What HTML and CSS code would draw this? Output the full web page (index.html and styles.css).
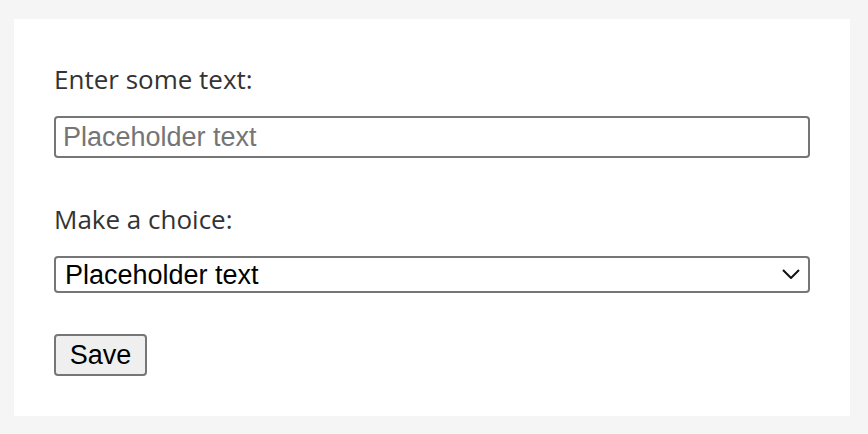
FILE: index.html
```html
<!DOCTYPE html>
<html lang="en">
<head>
  <meta charset="UTF-8">
  <meta name="viewport" content="width=device-width, initial-scale=1.0">
  <title>Form</title>
  <link rel="stylesheet" href="styles.css">
</head>
<body>
  <div class="card">
    <form class="form" onsubmit="return false">
      <div class="field">
        <label for="texto">Enter some text:</label>
        <input type="text" id="texto" placeholder="Placeholder text">
      </div>
      <div class="field">
        <label for="opcion">Make a choice:</label>
        <div class="select-wrap">
          <select id="opcion">
            <option>Placeholder text</option>
          </select>
          <svg class="chevron" width="18" height="10" viewBox="0 0 18 10">
            <path d="M1 1 L9 9 L17 1" fill="none" stroke="#111" stroke-width="2"/>
          </svg>
        </div>
      </div>
      <button type="submit">Save</button>
    </form>
  </div>
</body>
</html>
```

FILE: styles.css
```css
body {
  margin: 0;
  padding: 19px 18px 18px 14px;
  background: #f5f5f5;
  font-family: "Open Sans", sans-serif;
}
.card {
  background: #fff;
  padding: 40px;
}
.field {
  margin-bottom: 41px;
}
label {
  display: block;
  font-size: 26px;
  line-height: 40px;
  color: #333;
  margin-bottom: 17px;
}
input, select, button {
  font-family: "Liberation Sans", Arial, sans-serif;
  font-size: 27px;
  border: 2px solid #767676;
  border-radius: 4px;
  box-sizing: border-box;
  margin: 0;
}
input {
  display: block;
  width: 100%;
  height: 42px;
  padding: 0 7px;
  color: #000;
}
input::placeholder {
  color: #757575;
}
.select-wrap {
  position: relative;
}
select {
  display: block;
  width: 100%;
  height: 37px;
  padding: 0 40px 0 9px;
  appearance: none;
  background: #fff;
  color: #000;
}
.chevron {
  position: absolute;
  right: 10px;
  top: 13px;
  pointer-events: none;
}
button {
  width: 93px;
  height: 42px;
  padding: 0;
  background: #efefef;
  color: #000;
  cursor: pointer;
}
```
